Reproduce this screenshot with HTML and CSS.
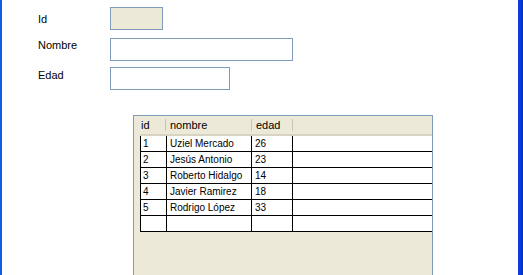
FILE: index.html
```html
<!DOCTYPE html>
<html>
<head>
<meta charset="utf-8">
<link rel="stylesheet" href="styles.css">
</head>
<body>
<div class="frame">
  <div class="content">
    <div class="form">
      <div class="row row-id">
        <span class="label lbl-id">Id</span>
        <div class="field field-id"></div>
      </div>
      <div class="row row-nombre">
        <span class="label lbl-nombre">Nombre</span>
        <div class="field field-nombre"></div>
      </div>
      <div class="row row-edad">
        <span class="label lbl-edad">Edad</span>
        <div class="field field-edad"></div>
      </div>
    </div>
    <div class="scroll">
      <div class="thead">
        <div class="th c1">id</div>
        <div class="th c2">nombre</div>
        <div class="th c3">edad</div>
        <div class="th c4"></div>
      </div>
      <div class="tbody">
        <div class="tr"><div class="td c1">1</div><div class="td c2">Uziel Mercado</div><div class="td c3">26</div><div class="td c4"></div></div>
        <div class="tr"><div class="td c1">2</div><div class="td c2">Jesús Antonio</div><div class="td c3">23</div><div class="td c4"></div></div>
        <div class="tr"><div class="td c1">3</div><div class="td c2">Roberto Hidalgo</div><div class="td c3">14</div><div class="td c4"></div></div>
        <div class="tr"><div class="td c1">4</div><div class="td c2">Javier Ramirez</div><div class="td c3">18</div><div class="td c4"></div></div>
        <div class="tr"><div class="td c1">5</div><div class="td c2">Rodrigo López</div><div class="td c3">33</div><div class="td c4"></div></div>
        <div class="tr"><div class="td c1"></div><div class="td c2"></div><div class="td c3"></div><div class="td c4"></div></div>
      </div>
    </div>
  </div>
  <div class="rightbar"><div class="rb-inner"></div></div>
</div>
</body>
</html>
```
FILE: styles.css
```css
html, body {
  margin: 0;
  padding: 0;
  background: #ffffff;
  overflow: hidden;
}
body {
  font-family: "Liberation Sans", Arial, sans-serif;
  color: #000;
}
.frame {
  display: flex;
  height: 275px;
  width: 523px;
  border-left: 2px solid #0c5de8;
  box-sizing: border-box;
}
.content {
  flex: 1;
  display: flex;
  flex-direction: column;
  min-width: 0;
}
.rightbar {
  width: 5px;
  background: #0a3bd9;
  display: flex;
  justify-content: flex-end;
}
.rb-inner {
  width: 2px;
  background: #0832c0;
}
.form {
  display: flex;
  flex-direction: column;
  padding-left: 36px;
  padding-top: 7px;
}
.row {
  display: flex;
  align-items: flex-start;
}
.row-nombre { margin-top: 8px; }
.row-edad { margin-top: 6px; }
.label {
  width: 72px;
  font-size: 11px;
  line-height: 13px;
}
.lbl-id { margin-top: 6px; }
.lbl-nombre { margin-top: 1px; }
.lbl-edad { margin-top: 2px; }
.field {
  height: 23px;
  box-sizing: border-box;
  border: 1px solid #7f9db9;
  background: #fff;
}
.field-id { width: 53px; background: #ece9d8; }
.field-nombre { width: 183px; }
.field-edad { width: 120px; }

.scroll {
  margin-top: 25px;
  margin-left: 131px;
  width: 300px;
  flex: 1;
  box-sizing: border-box;
  border: 1px solid #7f9db9;
  border-bottom: none;
  background: #ece9d8;
  display: flex;
  flex-direction: column;
  padding-left: 6px;
}
.thead {
  display: grid;
  grid-template-columns: 26px 86px 41px 1fr;
  height: 20px;
  box-sizing: border-box;
  border-bottom: 2px solid #d8d4c4;
}
.th {
  font-size: 11px;
  line-height: 18px;
  padding-left: 4px;
  position: relative;
}
.th.c1 { padding-left: 1px; }
.th::after {
  content: "";
  position: absolute;
  right: 0;
  top: 3px;
  height: 12px;
  width: 1px;
  background: #c8c5b7;
}
.th.c4::after { display: none; }
.tbody {
  display: flex;
  flex-direction: column;
  background: #fff;
  border-left: 1px solid #000;
}
.tr {
  display: grid;
  grid-template-columns: 26px 85px 41px 1fr;
  height: 16px;
  box-sizing: border-box;
  border-bottom: 1px solid #000;
}
.td {
  font-size: 10px;
  line-height: 15px;
  padding-left: 2px;
  border-right: 1px solid #000;
  white-space: nowrap;
  overflow: hidden;
}
.td.c2, .td.c3 { padding-left: 3px; }
.td.c4 { border-right: none; }
```
